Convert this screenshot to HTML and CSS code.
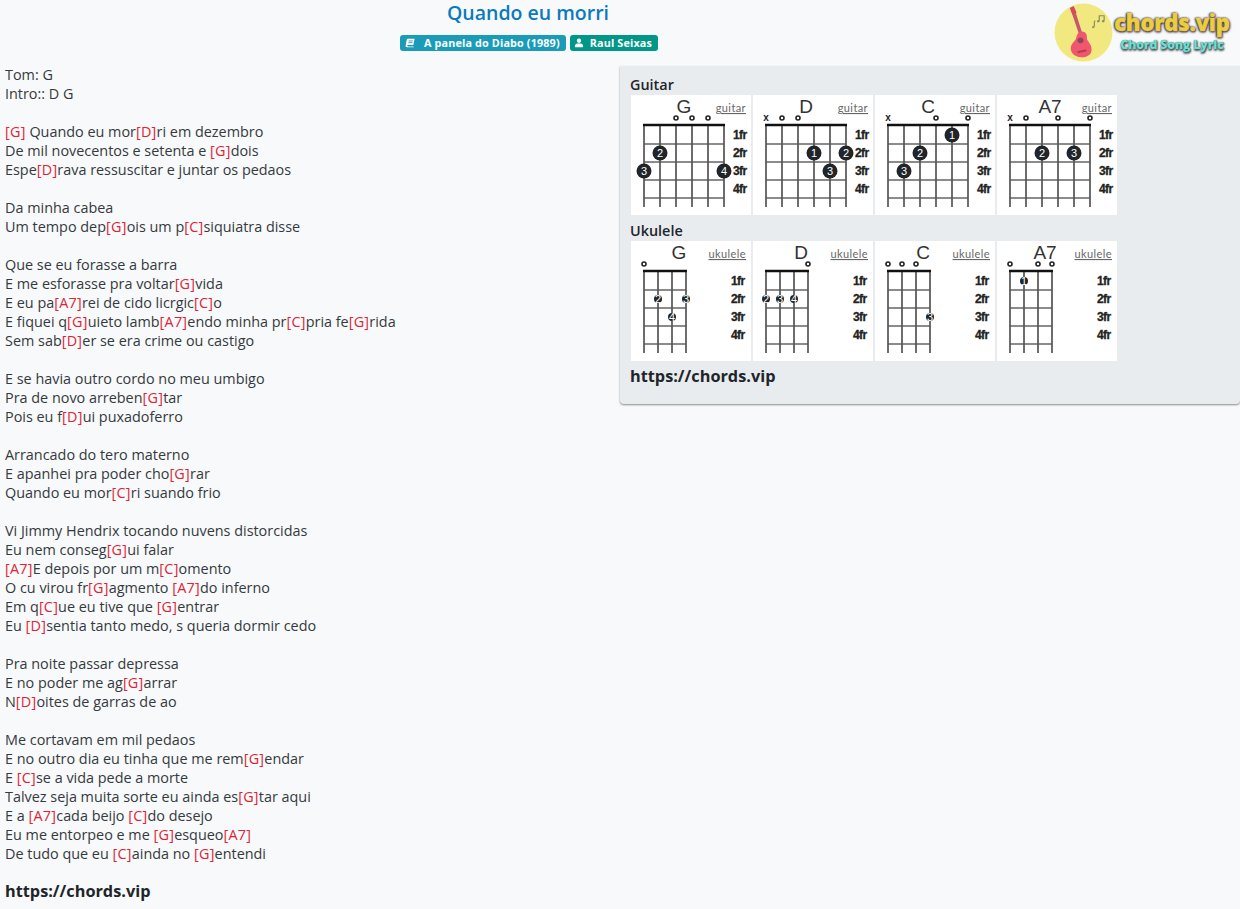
FILE: index.html
```html
<!DOCTYPE html>
<html lang="pt">
<head>
<meta charset="utf-8">
<title>Quando eu morri</title>
<link rel="stylesheet" href="styles.css">
</head>
<body>
<svg class="defs" xmlns="http://www.w3.org/2000/svg">
  <symbol id="grid-guitar" viewBox="0 0 120 120">
    <path class="fret" d="M13 49H93M13 67H93M13 85H93M13 103H93"/>
    <path class="string" d="M13 30V112M29 30V112M45 30V112M61 30V112M77 30V112M93 30V112"/>
    <path class="nut" d="M12 30H94"/>
    <text class="fr" x="102" y="44">1fr</text>
    <text class="fr" x="102" y="62">2fr</text>
    <text class="fr" x="102" y="80">3fr</text>
    <text class="fr" x="102" y="98">4fr</text>
    <text class="kind" x="115" y="17" text-anchor="end">guitar</text>
  </symbol>
  <symbol id="grid-ukulele" viewBox="0 0 120 120">
    <path class="fret" d="M13 49H55M13 67H55M13 85H55M13 103H55"/>
    <path class="string" d="M13 30V112M27 30V112M41 30V112M55 30V112"/>
    <path class="nut" d="M12 30H56"/>
    <text class="fr" x="100" y="44">1fr</text>
    <text class="fr" x="100" y="62">2fr</text>
    <text class="fr" x="100" y="80">3fr</text>
    <text class="fr" x="100" y="98">4fr</text>
    <text class="kind" x="115" y="17" text-anchor="end">ukulele</text>
  </symbol>
</svg>

<header class="top">
  <div class="heading">
    <h1 class="title">Quando eu morri</h1>
    <div class="badges">
      <span class="badge badge-album">
        <svg class="badge-icon" viewBox="0 0 12 12"><path d="M3.500 1h8L10 8.500H3.400c-.9 0-.9 1.600 0 1.600h7V11H2.500C1.100 11 .6 10.200 .8 9L2 2.500C2.200 1.500 2.700 1 3.500 1z"/><path class="badge-cut" d="M4.300 3.500h5M4 5.500h5"/></svg>
        A panela do Diabo (1989)
      </span>
      <span class="badge badge-artist">
        <svg class="badge-icon" viewBox="0 0 12 12"><circle cx="6" cy="3.300" r="2.600"/><path d="M1.800 11c-.5 0-.8-.3-.8-.8C1 8 2.400 6.500 4 6.500h4c1.600 0 3 1.500 3 3.700 0 .5-.3.8-.8.8z"/></svg>
        Raul Seixas
      </span>
    </div>
  </div>
  <div class="logo">
    <svg class="logo-mark" viewBox="0 0 60 60">
      <circle cx="30" cy="30" r="29.500" fill="#f1e97f"/>
      <path d="M17 7l4 -1 9 29-3 1z" fill="#c9566b"/>
      <path d="M16 5l4-2 3 7-4 2z" fill="#d9485f"/>
      <path d="M25 30c3-2 7-1 8 2 1 2 0 4 1 6 2 3 5 6 4 11-1 5-7 7-12 6-5-1-9-4-9-9 0-4 3-6 5-9 1-2 1-5 3-7z" fill="#f0566e"/>
      <circle cx="27" cy="38" r="3" fill="#8a4a55"/>
      <path d="M24 50l9-2" stroke="#b93a50" stroke-width="2" fill="none"/>
      <path d="M41 24v-5l1-1M46 18v-5h5v5" stroke="#8d8a5c" stroke-width="1.200" fill="none"/>
      <circle cx="45" cy="18.500" r="1.200" fill="#8d8a5c"/><circle cx="50" cy="18.500" r="1.200" fill="#8d8a5c"/>
      <circle cx="40" cy="24.500" r="1.200" fill="#8d8a5c"/>
    </svg>
    <div class="logo-text">
      <span class="logo-name">chords.vip</span>
      <span class="logo-sub">Chord Song Lyric</span>
    </div>
  </div>
</header>

<main class="content">
  <article class="lyrics">
    <div class="stanza">
      <div>Tom: G</div>
      <div>Intro:: D G</div>
    </div>
    <div class="stanza">
      <div><b>[G]</b> Quando eu mor<b>[D]</b>ri em dezembro</div>
      <div>De mil novecentos e setenta e <b>[G]</b>dois</div>
      <div>Espe<b>[D]</b>rava ressuscitar e juntar os pedaos</div>
    </div>
    <div class="stanza">
      <div>Da minha cabea</div>
      <div>Um tempo dep<b>[G]</b>ois um p<b>[C]</b>siquiatra disse</div>
    </div>
    <div class="stanza">
      <div>Que se eu forasse a barra</div>
      <div>E me esforasse pra voltar<b>[G]</b>vida</div>
      <div>E eu pa<b>[A7]</b>rei de cido licrgic<b>[C]</b>o</div>
      <div>E fiquei q<b>[G]</b>uieto lamb<b>[A7]</b>endo minha pr<b>[C]</b>pria fe<b>[G]</b>rida</div>
      <div>Sem sab<b>[D]</b>er se era crime ou castigo</div>
    </div>
    <div class="stanza">
      <div>E se havia outro cordo no meu umbigo</div>
      <div>Pra de novo arreben<b>[G]</b>tar</div>
      <div>Pois eu f<b>[D]</b>ui puxadoferro</div>
    </div>
    <div class="stanza">
      <div>Arrancado do tero materno</div>
      <div>E apanhei pra poder cho<b>[G]</b>rar</div>
      <div>Quando eu mor<b>[C]</b>ri suando frio</div>
    </div>
    <div class="stanza">
      <div>Vi Jimmy Hendrix tocando nuvens distorcidas</div>
      <div>Eu nem conseg<b>[G]</b>ui falar</div>
      <div><b>[A7]</b>E depois por um m<b>[C]</b>omento</div>
      <div>O cu virou fr<b>[G]</b>agmento <b>[A7]</b>do inferno</div>
      <div>Em q<b>[C]</b>ue eu tive que <b>[G]</b>entrar</div>
      <div>Eu <b>[D]</b>sentia tanto medo, s queria dormir cedo</div>
    </div>
    <div class="stanza">
      <div>Pra noite passar depressa</div>
      <div>E no poder me ag<b>[G]</b>arrar</div>
      <div>N<b>[D]</b>oites de garras de ao</div>
    </div>
    <div class="stanza">
      <div>Me cortavam em mil pedaos</div>
      <div>E no outro dia eu tinha que me rem<b>[G]</b>endar</div>
      <div>E <b>[C]</b>se a vida pede a morte</div>
      <div>Talvez seja muita sorte eu ainda es<b>[G]</b>tar aqui</div>
      <div>E a <b>[A7]</b>cada beijo <b>[C]</b>do desejo</div>
      <div>Eu me entorpeo e me <b>[G]</b>esqueo<b>[A7]</b></div>
      <div>De tudo que eu <b>[C]</b>ainda no <b>[G]</b>entendi</div>
    </div>
    <p class="site">https://chords.vip</p>
  </article>

  <aside class="panel">
    <h2 class="panel-title">Guitar</h2>
    <div class="chords">
      <svg class="chord" viewBox="0 0 120 120">
        <use href="#grid-guitar" width="120" height="120"/>
        <text class="name" x="53" y="18">G</text>
        <circle class="open" cx="45" cy="23" r="2"/><circle class="open" cx="61" cy="23" r="2"/><circle class="open" cx="77" cy="23" r="2"/>
        <circle class="dot" cx="29" cy="58" r="7.500"/><text class="num" x="29" y="62">2</text>
        <circle class="dot" cx="13" cy="76" r="7.500"/><text class="num" x="13" y="80">3</text>
        <circle class="dot" cx="93" cy="76" r="7.500"/><text class="num" x="93" y="80">4</text>
      </svg>
      <svg class="chord" viewBox="0 0 120 120">
        <use href="#grid-guitar" width="120" height="120"/>
        <text class="name" x="53" y="18">D</text>
        <text class="mute" x="13" y="26">x</text>
        <circle class="open" cx="29" cy="23" r="2"/><circle class="open" cx="45" cy="23" r="2"/>
        <circle class="dot" cx="61" cy="58" r="7.500"/><text class="num" x="61" y="62">1</text>
        <circle class="dot" cx="93" cy="58" r="7.500"/><text class="num" x="93" y="62">2</text>
        <circle class="dot" cx="77" cy="76" r="7.500"/><text class="num" x="77" y="80">3</text>
      </svg>
      <svg class="chord" viewBox="0 0 120 120">
        <use href="#grid-guitar" width="120" height="120"/>
        <text class="name" x="53" y="18">C</text>
        <text class="mute" x="13" y="26">x</text>
        <circle class="open" cx="61" cy="23" r="2"/><circle class="open" cx="93" cy="23" r="2"/>
        <circle class="dot" cx="77" cy="40" r="7.500"/><text class="num" x="77" y="44">1</text>
        <circle class="dot" cx="45" cy="58" r="7.500"/><text class="num" x="45" y="62">2</text>
        <circle class="dot" cx="29" cy="76" r="7.500"/><text class="num" x="29" y="80">3</text>
      </svg>
      <svg class="chord" viewBox="0 0 120 120">
        <use href="#grid-guitar" width="120" height="120"/>
        <text class="name" x="53" y="18">A7</text>
        <text class="mute" x="13" y="26">x</text>
        <circle class="open" cx="29" cy="23" r="2"/><circle class="open" cx="61" cy="23" r="2"/><circle class="open" cx="93" cy="23" r="2"/>
        <circle class="dot" cx="45" cy="58" r="7.500"/><text class="num" x="45" y="62">2</text>
        <circle class="dot" cx="77" cy="58" r="7.500"/><text class="num" x="77" y="62">3</text>
      </svg>
    </div>
    <h2 class="panel-title">Ukulele</h2>
    <div class="chords">
      <svg class="chord" viewBox="0 0 120 120">
        <use href="#grid-ukulele" width="120" height="120"/>
        <text class="name" x="48" y="18">G</text>
        <circle class="open" cx="13" cy="23" r="2"/>
        <circle class="dot" cx="27" cy="58" r="4"/><text class="num" x="27" y="62">2</text>
        <circle class="dot" cx="55" cy="58" r="4"/><text class="num" x="55" y="62">3</text>
        <circle class="dot" cx="41" cy="76" r="4"/><text class="num" x="41" y="80">4</text>
      </svg>
      <svg class="chord" viewBox="0 0 120 120">
        <use href="#grid-ukulele" width="120" height="120"/>
        <text class="name" x="48" y="18">D</text>
        <circle class="open" cx="55" cy="23" r="2"/>
        <circle class="dot" cx="13" cy="58" r="4"/><text class="num" x="13" y="62">2</text>
        <circle class="dot" cx="27" cy="58" r="4"/><text class="num" x="27" y="62">3</text>
        <circle class="dot" cx="41" cy="58" r="4"/><text class="num" x="41" y="62">4</text>
      </svg>
      <svg class="chord" viewBox="0 0 120 120">
        <use href="#grid-ukulele" width="120" height="120"/>
        <text class="name" x="48" y="18">C</text>
        <circle class="open" cx="13" cy="23" r="2"/><circle class="open" cx="27" cy="23" r="2"/><circle class="open" cx="41" cy="23" r="2"/>
        <circle class="dot" cx="55" cy="76" r="4"/><text class="num" x="55" y="80">3</text>
      </svg>
      <svg class="chord" viewBox="0 0 120 120">
        <use href="#grid-ukulele" width="120" height="120"/>
        <text class="name" x="48" y="18">A7</text>
        <circle class="open" cx="13" cy="23" r="2"/><circle class="open" cx="41" cy="23" r="2"/><circle class="open" cx="55" cy="23" r="2"/>
        <circle class="dot" cx="27" cy="40" r="4"/><text class="num" x="27" y="44">1</text>
      </svg>
    </div>
    <p class="site site-panel">https://chords.vip</p>
  </aside>
</main>
</body>
</html>
```
FILE: styles.css
```css
* { box-sizing: border-box; }

html, body { margin: 0; padding: 0; }

body {
  background: #f8f9fa;
  color: #343a40;
  font-family: "Open Sans", "Liberation Sans", sans-serif;
  font-size: 14.4px;
  line-height: 19px;
  overflow: hidden;
}

.defs { display: none; }

.top {
  display: flex;
  height: 65px;
}

.heading {
  width: 1054px;
  flex: none;
  display: flex;
  flex-direction: column;
  align-items: center;
  padding-left: 4px;
}

.title {
  margin: 0 2px 0 0;
  font-size: 19.5px;
  line-height: 25px;
  font-weight: 600;
  color: #0a7abf;
}

.badges {
  display: flex;
  gap: 4px;
  margin-top: 10px;
}

.badge {
  display: flex;
  align-items: center;
  height: 16px;
  padding: 0 6px 0 5px;
  border-radius: 3px;
  color: #fff;
  font-size: 10.8px;
  font-weight: 700;
  letter-spacing: 0.15px;
  line-height: 16px;
}

.badge-album { background: #1a9cb8; }
.badge-artist { background: #009688; padding-left: 4px; }

.badge-icon {
  width: 10px;
  height: 10px;
  margin-right: 6px;
  fill: #fff;
}

.badge-album .badge-icon { margin-right: 9px; }

.badge-cut {
  fill: none;
  stroke: #1a9cb8;
  stroke-width: 1;
}

.logo {
  display: flex;
  flex: none;
  width: 186px;
  padding-top: 3px;
  align-items: flex-start;
}

.logo-mark {
  width: 59px;
  height: 59px;
  flex: none;
}

.logo-text {
  display: flex;
  flex-direction: column;
  align-items: center;
  padding-top: 5px;
  width: 118px;
}

.logo-name {
  font-family: "Open Sans", sans-serif;
  font-size: 22px;
  font-weight: 800;
  line-height: 28px;
  letter-spacing: -0.2px;
  color: #e9cf3b;
  -webkit-text-stroke: 0.4px #e9cf3b;
  text-shadow: 0 0 2px #4c3a5c, 1px 1px 2px #4c3a5c, -1px 0 2px #4c3a5c, 0 1px 3px #4c3a5c;
}

.logo-sub {
  margin-top: 1px;
  font-family: "Open Sans", sans-serif;
  font-size: 12.2px;
  font-weight: 800;
  line-height: 16px;
  letter-spacing: -0.1px;
  color: #6fdcd2;
  text-shadow: 0 0 1px #2b5f5c, 1px 1px 2px #3a4a4a, 0 2px 2px #777;
}

.content {
  display: grid;
  grid-template-columns: 620px 1fr;
}

.lyrics {
  padding-left: 5px;
}

.stanza { margin-bottom: 19px; }

.stanza b {
  color: #dc2535;
  font-weight: 400;
  letter-spacing: 0.25px;
}

.site {
  margin: 0;
  font-size: 16.3px;
  line-height: 19px;
  font-weight: 700;
  color: #212529;
}

.panel {
  align-self: start;
  height: 338px;
  margin-top: 1px;
  padding: 9px 10px 10px;
  background: #e9ecef;
  border-radius: 0 0 4px 4px;
  box-shadow: 0 1px 2px rgba(0, 0, 0, 0.45);
}

.panel-title {
  margin: 0 0 1px;
  font-size: 14.4px;
  font-weight: 600;
  line-height: 19px;
  color: #212529;
}

.chords {
  display: flex;
  gap: 2px;
  padding-left: 1px;
  margin-bottom: 6px;
}

.chord {
  width: 120px;
  height: 120px;
  flex: none;
  background: #fff;
}

.site-panel { margin: 6px 0 0; }

.fret { stroke: #666; stroke-width: 1.5; fill: none; }
.string { stroke: #555; stroke-width: 1.7; fill: none; }
.nut { stroke: #111; stroke-width: 2.5; fill: none; }

.fr {
  font-family: "Liberation Sans", sans-serif;
  font-size: 12px;
  font-weight: 700;
  letter-spacing: -0.6px;
  fill: #222;
  stroke: #222;
  stroke-width: 0.3;
}

.kind {
  font-family: "Lato", sans-serif;
  font-size: 11px;
  letter-spacing: 0.4px;
  text-decoration: underline;
  fill: #666;
}

.name {
  font-family: "Liberation Sans", sans-serif;
  font-size: 19px;
  text-anchor: middle;
  fill: #333;
}

.mute {
  font-family: "Liberation Sans", sans-serif;
  font-size: 10px;
  font-weight: 700;
  text-anchor: middle;
  fill: #222;
}

.open {
  fill: none;
  stroke: #222;
  stroke-width: 1.6;
}

.dot { fill: #212529; }

.num {
  font-family: "Liberation Sans", sans-serif;
  font-size: 11px;
  text-anchor: middle;
  fill: #fff;
}
```
